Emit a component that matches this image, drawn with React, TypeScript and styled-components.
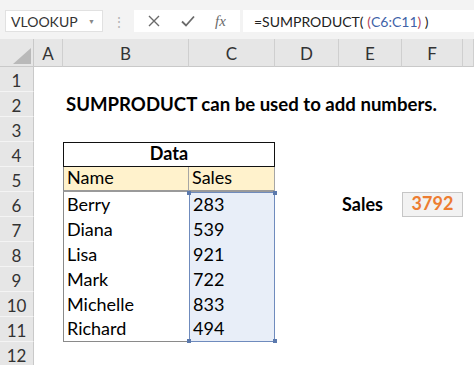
import { Fragment } from "react";
import styled, { createGlobalStyle, css } from "styled-components";

const GlobalStyle = createGlobalStyle`
  html, body {
    margin: 0;
    padding: 0;
    background: #fff;
  }
  body {
    font-family: Lato, "Liberation Sans", sans-serif;
    overflow: hidden;
  }
`;

const Window = styled.div`
  width: 474px;
  height: 365px;
  overflow: hidden;
  background: #fff;
  display: flex;
  flex-direction: column;
`;

const Toolbar = styled.div`
  height: 39px;
  flex: none;
  box-sizing: border-box;
  background: #f3f3f3;
  display: flex;
  align-items: flex-start;
  padding: 10px 0 0 5px;
`;

const NameBox = styled.div`
  width: 98px;
  height: 22px;
  box-sizing: border-box;
  background: #fff;
  border: 1px solid #e1e1e1;
  display: flex;
  align-items: center;
  justify-content: space-between;
  padding: 0 7px 0 5px;
  font-size: 14px;
  color: #333;
`;

const Caret = styled.span`
  font-size: 7px;
  color: #888;
`;

const Grip = styled.div`
  width: 31px;
  height: 22px;
  display: flex;
  align-items: center;
  justify-content: center;
  color: #b5b5b5;
  font-size: 14px;
`;

const IconBox = styled.div`
  width: 106px;
  height: 22px;
  box-sizing: border-box;
  background: #fff;
  display: flex;
  align-items: center;
  justify-content: space-around;
  padding: 0 4px;
`;

const Fx = styled.span`
  font-family: "Liberation Serif", serif;
  font-style: italic;
  font-size: 15px;
  color: #6a6a6a;
`;

const FormulaInput = styled.div`
  flex: 1;
  height: 22px;
  margin-left: 3px;
  box-sizing: border-box;
  background: #fff;
  display: flex;
  align-items: center;
  padding-left: 11px;
  font-size: 14px;
  color: #222;
  white-space: pre;
`;

const Ref = styled.span<{ $paren?: boolean }>`
  color: ${({ $paren }) => ($paren ? "#b5475b" : "#3f62a8")};
`;

const Sheet = styled.div`
  display: grid;
  grid-template-columns: 34px 29px 126px 86px 64px 63px 61px 1fr;
  grid-template-rows: 28px repeat(12, 25px);
`;

const Corner = styled.div`
  background: #e6e6e6;
  border-right: 1px solid #c9c9c9;
  border-bottom: 1px solid #c9c9c9;
  box-sizing: border-box;
  display: flex;
  align-items: flex-end;
  justify-content: flex-end;
  padding: 0 2px 2px 0;
`;

const ColHead = styled.div`
  background: #e6e6e6;
  border-right: 1px solid #cfcfcf;
  border-bottom: 1px solid #c9c9c9;
  box-sizing: border-box;
  display: flex;
  align-items: center;
  justify-content: center;
  padding-top: 2px;
  font-size: 17px;
  color: #333;
`;

const RowHead = styled.div`
  background: #e6e6e6;
  border-right: 1px solid #c9c9c9;
  border-bottom: 1px solid #f4f4f4;
  box-sizing: border-box;
  display: flex;
  align-items: center;
  justify-content: center;
  padding-top: 2px;
  font-size: 17px;
  color: #333;
`;

const Cell = styled.div<{ $span?: number }>`
  box-sizing: border-box;
  display: flex;
  align-items: flex-end;
  padding: 0 3px 2px;
  font-size: 18px;
  color: #000;
  white-space: nowrap;
  min-width: 0;
  ${({ $span }) => $span && `grid-column: span ${$span};`}
`;

const Note = styled(Cell)`
  font-size: 18.6px;
  font-weight: bold;
`;

const DataTitle = styled(Cell)`
  grid-column: span 2;
  justify-content: center;
  font-weight: bold;
  border: 1px solid #111;
`;

const HeadCell = styled(Cell)<{ $first?: boolean }>`
  background: #fff2cc;
  border-bottom: 2px solid #9a9a9a;
  border-right: 1px solid #a6a6a6;
  ${({ $first }) => $first && `border-left: 1px solid #8a8a8a;`}
`;

const NameCell = styled(Cell)<{ $last?: boolean }>`
  border-left: 1px solid #8a8a8a;
  ${({ $last }) => $last && `border-bottom: 1px solid #8a8a8a;`}
`;

const handle = css`
  content: "";
  position: absolute;
  width: 4px;
  height: 4px;
  background: #5b79ad;
`;

const SalesCell = styled(Cell)<{ $first?: boolean; $last?: boolean }>`
  position: relative;
  background: #e8eef8;
  border-left: 1px solid #6f8bbd;
  border-right: 1px solid #6f8bbd;
  ${({ $first }) =>
    $first &&
    css`
      border-top: 1px solid #6f8bbd;
      &::before { ${handle} top: -2px; left: -3px; }
      &::after { ${handle} top: -2px; right: -3px; }
    `}
  ${({ $last }) =>
    $last &&
    css`
      border-bottom: 1px solid #6f8bbd;
      &::before { ${handle} bottom: -2px; left: -3px; }
      &::after { ${handle} bottom: -2px; right: -3px; }
    `}
`;

const Label = styled(Cell)`
  justify-content: flex-end;
  padding-right: 19px;
  font-weight: bold;
`;

const Result = styled(Cell)`
  justify-content: center;
  background: #f2f2f2;
  border: 1px solid #c6c6c6;
  color: #ed7d31;
  font-weight: bold;
`;

const COLS = ["A", "B", "C", "D", "E", "F", ""];

const people: [string, number][] = [
  ["Berry", 283],
  ["Diana", 539],
  ["Lisa", 921],
  ["Mark", 722],
  ["Michelle", 833],
  ["Richard", 494],
];

function Blanks({ n }: { n: number }) {
  return (
    <>
      {Array.from({ length: n }, (_, i) => (
        <Cell key={i} />
      ))}
    </>
  );
}

export default function App() {
  return (
    <Window>
      <GlobalStyle />
      <Toolbar>
        <NameBox>
          VLOOKUP
          <Caret>▼</Caret>
        </NameBox>
        <Grip>⋮</Grip>
        <IconBox>
          <svg width="12" height="12" viewBox="0 0 12 12">
            <path d="M1 1 L11 11 M11 1 L1 11" stroke="#6a6a6a" strokeWidth="1.4" />
          </svg>
          <svg width="14" height="12" viewBox="0 0 14 12">
            <path d="M1 6.5 L5 10.5 L13 1.5" stroke="#6a6a6a" strokeWidth="1.8" fill="none" />
          </svg>
          <Fx>fx</Fx>
        </IconBox>
        <FormulaInput>
          =SUMPRODUCT( <Ref $paren>(</Ref>
          <Ref>C6:C11</Ref>
          <Ref $paren>)</Ref> )
        </FormulaInput>
      </Toolbar>

      <Sheet>
        <Corner>
          <svg width="18" height="16" viewBox="0 0 18 16">
            <polygon points="18,0 18,16 0,16" fill="#b9b9b9" />
          </svg>
        </Corner>
        {COLS.map((c, i) => (
          <ColHead key={i}>{c}</ColHead>
        ))}

        <RowHead>1</RowHead>
        <Blanks n={7} />

        <RowHead>2</RowHead>
        <Cell />
        <Note $span={6}>SUMPRODUCT can be used to add numbers.</Note>

        <RowHead>3</RowHead>
        <Blanks n={7} />

        <RowHead>4</RowHead>
        <Cell />
        <DataTitle>Data</DataTitle>
        <Blanks n={4} />

        <RowHead>5</RowHead>
        <Cell />
        <HeadCell $first>Name</HeadCell>
        <HeadCell>Sales</HeadCell>
        <Blanks n={4} />

        {people.map(([name, sales], i) => {
          const last = i === people.length - 1;
          return (
            <Fragment key={name}>
              <RowHead>{i + 6}</RowHead>
              <Cell />
              <NameCell $last={last}>{name}</NameCell>
              <SalesCell $first={i === 0} $last={last}>
                {sales}
              </SalesCell>
              {i === 0 ? (
                <>
                  <Cell />
                  <Label>Sales</Label>
                  <Result>3792</Result>
                  <Cell />
                </>
              ) : (
                <Blanks n={4} />
              )}
            </Fragment>
          );
        })}

        <RowHead>12</RowHead>
        <Blanks n={7} />
      </Sheet>
    </Window>
  );
}
